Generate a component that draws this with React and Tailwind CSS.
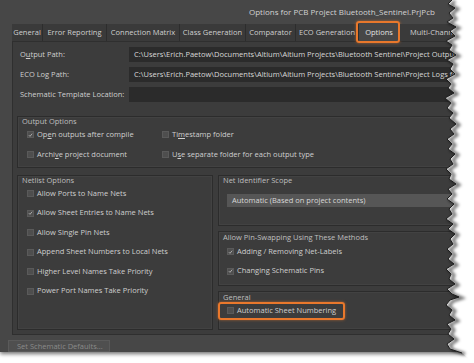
import React from 'react';

const tabs = [
    { label: 'General', w: 'w-[31px]' },
    { label: 'Error Reporting', w: 'w-[64px]' },
    { label: 'Connection Matrix', w: 'w-[73px]' },
    { label: 'Class Generation', w: 'w-[66px]' },
    { label: 'Comparator', w: 'w-[50px]' },
    { label: 'ECO Generation', w: 'w-[63px]' },
    { label: 'Options', w: 'w-[41px]', active: true },
    { label: 'Multi-Channel', w: 'w-[70px]' },
];

const netlist = [
    { label: 'Allow Ports to Name Nets' },
    { label: 'Allow Sheet Entries to Name Nets', checked: true },
    { label: 'Allow Single Pin Nets' },
    { label: 'Append Sheet Numbers to Local Nets' },
    { label: 'Higher Level Names Take Priority' },
    { label: 'Power Port Names Take Priority' },
];

// torn right edge of the screenshot
const edge = [
    [452, 0], [448, 4], [455, 8], [449, 13], [453, 18], [447, 22], [456, 27], [450, 31], [455, 36], [446, 41],
    [452, 45], [449, 50], [456, 55], [447, 60], [453, 64], [450, 69], [455, 74], [446, 79], [451, 84], [448, 88],
    [454, 93], [445, 98], [451, 103], [447, 108], [453, 113], [449, 118], [456, 124], [450, 129], [454, 134],
    [447, 139], [452, 144], [448, 149], [455, 154], [450, 159], [453, 164], [446, 169], [451, 174], [449, 179],
    [456, 184], [448, 189], [452, 194], [447, 199], [454, 204], [449, 209], [452, 214], [446, 219], [453, 224],
    [448, 229], [455, 234], [450, 239], [453, 244], [447, 249], [452, 254], [448, 259], [454, 264], [446, 269],
    [451, 274], [449, 279], [455, 284], [447, 289], [452, 294], [459, 297], [450, 300], [446, 305], [452, 310],
    [449, 315], [455, 320], [447, 324], [451, 329], [448, 334], [454, 339], [447, 344], [450, 349], [462, 353],
];
const edgePts = edge.map(([x, y]) => `${x},${y}`).join(' ');

function Check({ checked }) {
    return (
        <span className="w-[7px] h-[7px] shrink-0 bg-[#4e4e4e] border border-[#5a5a5a] flex items-center justify-center">
            {checked && (
                <svg width="6" height="6" viewBox="0 0 6 6">
                    <path d="M1 3.2 L2.4 4.6 L5 1.4" fill="none" stroke="#bdbdbd" strokeWidth="1" />
                </svg>
            )}
        </span>
    );
}

function CheckRow({ label, checked, className = '' }) {
    return (
        <div className={`flex items-center gap-[3px] whitespace-nowrap ${className}`}>
            <Check checked={checked} />
            <span>{label}</span>
        </div>
    );
}

function Group({ title, className = '', children }) {
    return (
        <div className={`border border-[#2c2c2c] shadow-[inset_0_0_0_1px_#424242] ${className}`}>
            <div className="h-[8px] leading-[9px] pl-[4px] text-[#bfbfbf] whitespace-nowrap">{title}</div>
            {children}
        </div>
    );
}

function PathRow({ label, value }) {
    return (
        <div className="flex items-center h-[15px]">
            <span className="w-[109px] shrink-0 whitespace-nowrap">{label}</span>
            <div className="flex-1 min-w-0 h-full bg-[#2b2b2b] flex items-center pl-[5px] whitespace-nowrap overflow-hidden text-[#d8d8d8]">
                {value}
            </div>
        </div>
    );
}

export default function App() {
    return (
        <div className="relative w-[474px] h-[363px] bg-white overflow-hidden text-[7.5px] text-[#cfcfcf] font-['Open_Sans',sans-serif]">
            <div className="w-[470px] h-[352px] bg-[#474747] flex flex-col shadow-[0_2px_4px_rgba(0,0,0,0.55)]">
                {/* title bar */}
                <div className="h-[24px] pl-[249px] pt-[6px] leading-[12px] text-[8px] text-[#d2d2d2] whitespace-nowrap">
                    Options for PCB Project Bluetooth_Sentinel.PrjPcb
                </div>

                {/* tabs */}
                <div className="ml-[12px] h-[17px] flex whitespace-nowrap">
                    {tabs.map((t) => (
                        <div
                            key={t.label}
                            className={`relative ${t.w} shrink-0 h-full flex items-center justify-center border-r border-[#2d2d2d] ${t.active ? 'bg-[#474747] text-[#e2e2e2]' : 'bg-[#3a3a3a]'}`}
                        >
                            {t.label}
                            {t.active && (
                                <span className="absolute left-[-3px] right-[-1px] top-[-3px] bottom-[-2px] rounded-[3px] border-2 border-[#e9782c] shadow-[0_0_3px_rgba(233,120,44,0.6)]" />
                            )}
                        </div>
                    ))}
                </div>

                {/* page */}
                <div className="ml-[12px] h-[296px] bg-[#3c3c3c] border border-[#2f2f2f] pl-[7px] pt-[5px] flex flex-col">
                    <div className="flex flex-col gap-[5px]">
                        <PathRow
                            label={<>O<span className="underline">u</span>tput Path:</>}
                            value="C:\Users\Erich.Paetow\Documents\Altium\Altium Projects\Bluetooth Sentinel\Project Outputs for Bluetooth_Sentinel"
                        />
                        <PathRow
                            label="ECO Log Path:"
                            value="C:\Users\Erich.Paetow\Documents\Altium\Altium Projects\Bluetooth Sentinel\Project Logs for Bluetooth_Sentinel"
                        />
                        <PathRow label="Schematic Template Location:" value="" />
                    </div>

                    <Group title="Output Options" className="mt-[14px] ml-[-3px] h-[52px]">
                        <div className="grid grid-cols-[135px_1fr] pl-[9px]">
                            <CheckRow className="h-[20px]" checked label={<>Op<span className="underline">e</span>n outputs after compile</>} />
                            <CheckRow className="h-[20px]" label={<>Ti<span className="underline">m</span>estamp folder</>} />
                            <CheckRow className="h-[20px]" label={<>Archi<span className="underline">v</span>e project document</>} />
                            <CheckRow className="h-[20px]" label={<>U<span className="underline">s</span>e separate folder for each output type</>} />
                        </div>
                    </Group>

                    <div className="mt-[7px] ml-[-3px] flex gap-[5px]">
                        <Group title="Netlist Options" className="w-[196px] h-[155px] shrink-0">
                            <div className="pl-[9px]">
                                {netlist.map((n) => (
                                    <CheckRow key={n.label} className="h-[19.5px]" checked={n.checked} label={n.label} />
                                ))}
                            </div>
                        </Group>

                        <div className="flex-1 flex flex-col gap-[5px]">
                            <Group title="Net Identifier Scope" className="h-[51px]">
                                <div className="mt-[10px] ml-[8px] h-[13px] bg-[#565656] flex items-center pl-[5px] text-[#d8d8d8] whitespace-nowrap">
                                    Automatic (Based on project contents)
                                </div>
                            </Group>
                            <Group title="Allow Pin-Swapping Using These Methods" className="h-[55px] pt-[1px]">
                                <div className="pl-[8px] pt-[1px]">
                                    <CheckRow className="h-[19.5px]" checked label="Adding / Removing Net-Labels" />
                                    <CheckRow className="h-[19.5px]" checked label="Changing Schematic Pins" />
                                </div>
                            </Group>
                            <Group title="General" className="h-[39px] pt-[1px]">
                                <div className="relative pl-[8px] h-[18px] mt-[1px]">
                                    <CheckRow className="h-full" label="Automatic Sheet Numbering" />
                                    <span className="absolute left-[-1px] top-0 w-[127px] h-[18px] rounded-[3px] border-2 border-[#e9782c] shadow-[0_0_3px_rgba(233,120,44,0.6)]" />
                                </div>
                            </Group>
                        </div>
                    </div>
                </div>

                {/* bottom strip */}
                <div className="flex-1 pl-[8px] pt-[5px]">
                    <div className="w-[102px] h-[12px] bg-[#4f4f4f] border border-[#5a5a5a] text-[#8a8a8a] pl-[8px] leading-[10px] overflow-hidden whitespace-nowrap">
                        Set Schematic Defaults...
                    </div>
                </div>
            </div>

            {/* torn edge */}
            <svg className="absolute left-0 top-0 pointer-events-none" width="474" height="363" viewBox="0 0 474 363">
                <defs>
                    <filter id="blur" x="-20%" y="-5%" width="140%" height="110%">
                        <feGaussianBlur stdDeviation="1.6" />
                    </filter>
                </defs>
                <polygon points={`474,0 ${edgePts} 474,363`} fill="#ffffff" />
                <polyline points={edgePts} transform="translate(3 1)" fill="none" stroke="rgba(0,0,0,0.55)" strokeWidth="3" filter="url(#blur)" />
                <polyline points={edgePts} fill="none" stroke="#1e1e1e" strokeWidth="1" />
            </svg>
        </div>
    );
}
